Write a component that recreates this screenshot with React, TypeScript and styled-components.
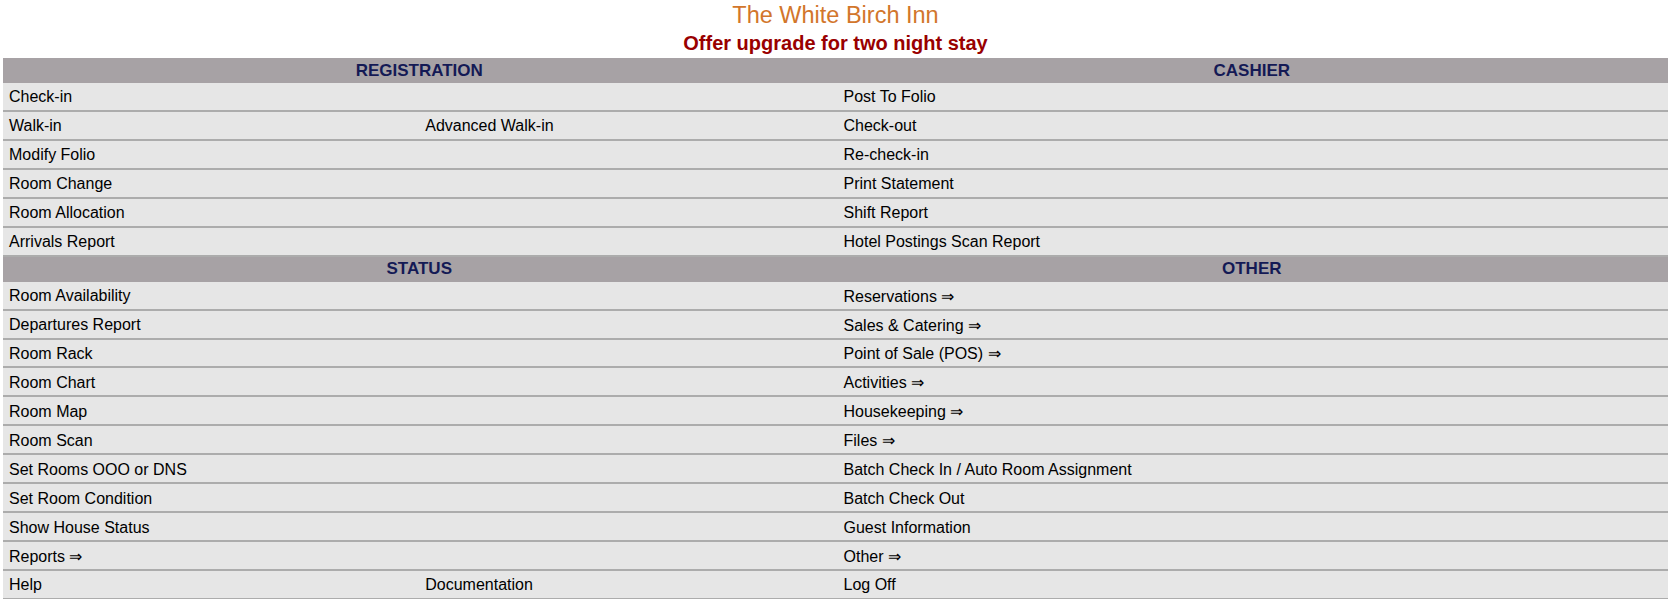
import styled, { createGlobalStyle } from "styled-components";

const GlobalStyle = createGlobalStyle`
  body {
    margin: 0;
    background: #fff;
    font-family: "Liberation Sans", Arial, sans-serif;
  }
`;

type LeftRow = [string, string?];

const sections: {
  left: string;
  right: string;
  leftRows: LeftRow[];
  rightRows: string[];
}[] = [
  {
    left: "REGISTRATION",
    right: "CASHIER",
    leftRows: [
      ["Check-in"],
      ["Walk-in", "Advanced Walk-in"],
      ["Modify Folio"],
      ["Room Change"],
      ["Room Allocation"],
      ["Arrivals Report"],
    ],
    rightRows: [
      "Post To Folio",
      "Check-out",
      "Re-check-in",
      "Print Statement",
      "Shift Report",
      "Hotel Postings Scan Report",
    ],
  },
  {
    left: "STATUS",
    right: "OTHER",
    leftRows: [
      ["Room Availability"],
      ["Departures Report"],
      ["Room Rack"],
      ["Room Chart"],
      ["Room Map"],
      ["Room Scan"],
      ["Set Rooms OOO or DNS"],
      ["Set Room Condition"],
      ["Show House Status"],
      ["Reports \u21D2"],
      ["Help", "Documentation"],
    ],
    rightRows: [
      "Reservations \u21D2",
      "Sales & Catering \u21D2",
      "Point of Sale (POS) \u21D2",
      "Activities \u21D2",
      "Housekeeping \u21D2",
      "Files \u21D2",
      "Batch Check In / Auto Room Assignment",
      "Batch Check Out",
      "Guest Information",
      "Other \u21D2",
      "Log Off",
    ],
  },
];

const App = () => {
  return (
    <Page>
      <GlobalStyle />
      <InnName>The White Birch Inn</InnName>
      <Promo>Offer upgrade for two night stay</Promo>

      <MenuGrid>
        {sections.map((section) => (
          <Section key={section.left}>
            <SectionHeader>{section.left}</SectionHeader>
            <SectionHeader>{section.right}</SectionHeader>
            {section.leftRows.map((row, idx) => (
              <Row key={idx}>
                <MenuCell>{row[0]}</MenuCell>
                <MenuCell>{row[1] ?? ""}</MenuCell>
                <MenuCell $span={2} $inset={8}>
                  {section.rightRows[idx]}
                </MenuCell>
              </Row>
            ))}
          </Section>
        ))}
      </MenuGrid>
    </Page>
  );
};

export default App;

const Page = styled.div`
  width: 100%;
  padding: 2px 1px 0 3px;
  box-sizing: border-box;
`;

const InnName = styled.div`
  text-align: center;
  color: #d2762b;
  font-size: 23.5px;
  line-height: 26px;
`;

const Promo = styled.div`
  text-align: center;
  color: #990000;
  font-size: 20px;
  font-weight: bold;
  line-height: 24px;
  margin-top: 3px;
  margin-bottom: 3px;
`;

const MenuGrid = styled.div`
  display: flex;
  flex-direction: column;
`;

const Section = styled.section`
  display: grid;
  grid-template-columns: repeat(4, 1fr);
`;

const Row = styled.div`
  display: contents;
`;

const SectionHeader = styled.div`
  grid-column: span 2;
  background-color: #a7a2a5;
  color: #141a55;
  font-weight: bold;
  font-size: 17px;
  height: 25px;
  display: flex;
  align-items: center;
  justify-content: center;
`;

const MenuCell = styled.div<{ $span?: number; $inset?: number }>`
  grid-column: span ${(props) => props.$span ?? 1};
  background-color: #e6e6e6;
  border-bottom: 2px solid #acacac;
  height: 24.95px;
  box-sizing: content-box;
  padding: 2px 6px 0 ${(props) => props.$inset ?? 6}px;
  display: flex;
  align-items: center;
  font-size: 16px;
  color: #000;
  white-space: nowrap;
`;
